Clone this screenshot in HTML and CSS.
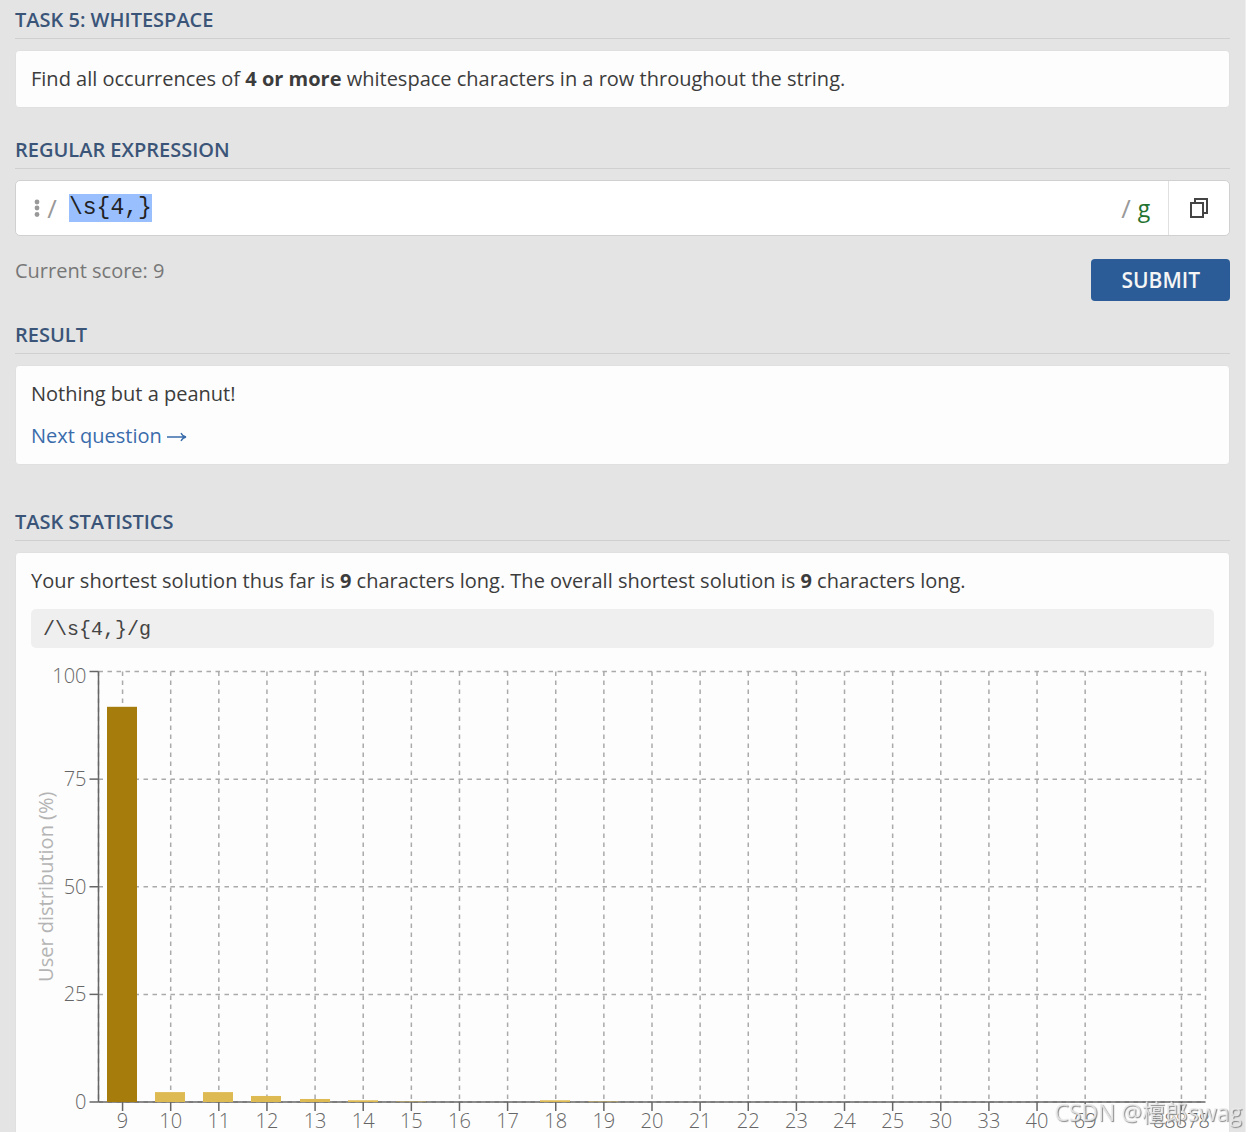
FILE: index.html
```
<!DOCTYPE html>
<html lang="en">
<head>
    <meta charset="UTF-8">
    <meta name="viewport" content="width=device-width, initial-scale=1">
    <title>Regex Quiz</title>
    <link rel="stylesheet" href="styles.css">
</head>
<body>
    <main class="quiz">
        <section class="task">
            <h2 class="heading">Task 5: Whitespace</h2>
            <div class="card">
                <p>Find all occurrences of <strong>4 or more</strong> whitespace characters in a row throughout the string.</p>
            </div>
        </section>

        <section class="expression">
            <h2 class="heading"><label for="regex">Regular Expression</label></h2>
            <form id="regexForm">
                <div class="regex-box">
                    <button type="button" class="delimiter" aria-label="Change delimiter">
                        <svg width="6" height="20" viewBox="0 0 6 20">
                            <circle cx="3" cy="4" r="2.4"/>
                            <circle cx="3" cy="10" r="2.4"/>
                            <circle cx="3" cy="16.500" r="2.4"/>
                        </svg>
                    </button>
                    <span class="slash">/</span>
                    <input class="regex-input" id="regex" type="text" value="\s{4,}" spellcheck="false" autocomplete="off">
                    <span class="slash">/</span>
                    <button type="button" class="flags" aria-label="Set flags">g</button>
                    <button type="button" class="copy" aria-label="Copy to clipboard">
                        <svg width="18" height="20" viewBox="0 0 18 20">
                            <path d="M1 5h12v14H1z"/>
                            <path d="M5 5V1h12v14h-4"/>
                        </svg>
                    </button>
                </div>
                <div class="form-footer">
                    <p class="score">Current score: 9</p>
                    <button type="submit" class="submit">Submit</button>
                </div>
            </form>
        </section>

        <section class="result">
            <h2 class="heading">Result</h2>
            <div class="card">
                <p>Nothing but a peanut!</p>
                <p><a class="next" href="#next">Next question <svg width="20" height="12" viewBox="0 0 20 12"><path d="M0 6h18M14 2c1 2 2.500 3.500 5 4-2.500.5-4 2-5 4"/></svg></a></p>
            </div>
        </section>

        <section class="statistics">
            <h2 class="heading">Task Statistics</h2>
            <div class="card">
                <p>Your shortest solution thus far is <strong>9</strong> characters long. The overall shortest solution is <strong>9</strong> characters long.</p>
                <code class="solution">/\s{4,}/g</code>
                <svg class="chart" id="chart" role="img" aria-label="User distribution (%)"></svg>
            </div>
        </section>
    </main>
    <div class="watermark">CSDN @檀郎swag</div>

    <script src="script.js"></script>
</body>
</html>
```

FILE: styles.css
```
* {
    box-sizing: border-box;
}

body {
    margin: 0;
    height: 100vh;
    overflow: hidden;
    background: #e4e4e4;
    border-right: 1px solid #efefef;
    color: #3c3c3c;
    font-family: 'Open Sans', 'Noto Sans CJK SC', sans-serif;
    font-size: 20px;
    line-height: 28px;
}

p {
    margin: 0;
}

button,
input {
    font-family: inherit;
    font-size: inherit;
    line-height: inherit;
    margin: 0;
    padding: 0;
    border: 0;
    background: none;
}

button {
    cursor: pointer;
}

.quiz {
    padding: 6px 15px 0;
}

.heading {
    margin: 0 0 11px;
    padding-bottom: 4px;
    border-bottom: 1px solid #d0d0d0;
    color: #3b5579;
    font-size: 20px;
    font-weight: 600;
    text-transform: uppercase;
}

.expression {
    margin-top: 28px;
}

.result {
    margin-top: 20px;
}

.statistics {
    margin-top: 43px;
}

.card {
    display: flex;
    flex-direction: column;
    gap: 14px;
    padding: 14px 15px;
    background: #fdfdfd;
    border: 1px solid #e0e0e0;
    border-radius: 4px;
}

/* regex field */
.regex-box {
    display: flex;
    align-items: center;
    height: 56px;
    padding-left: 18px;
    background: #fff;
    border: 1px solid #d0d0d0;
    border-radius: 5px;
    font-size: 23px;
}

.delimiter {
    display: flex;
    margin-right: 6px;
    fill: #999;
}

.slash {
    width: 12px;
    color: #999;
    font-size: 26px;
    text-align: center;
}

.regex-input {
    flex: 1;
    min-width: 0;
    margin-left: 11px;
    outline: none;
    color: #222;
    font-family: 'Liberation Mono', monospace;
}

.regex-input::selection {
    background: rgba(153, 191, 255, 0.996);
    color: #222;
}

.flags {
    width: 24px;
    margin-right: 12px;
    color: #24722f;
}

.copy {
    display: flex;
    align-items: center;
    justify-content: center;
    align-self: stretch;
    width: 61px;
    border-left: 1px solid #e0e0e0;
}

.copy svg {
    fill: none;
    stroke: #444;
    stroke-width: 2;
}

.form-footer {
    display: flex;
    justify-content: space-between;
    align-items: flex-start;
    padding-top: 23px;
}

.score {
    color: #777;
    line-height: 24px;
}

.submit {
    height: 42px;
    padding: 0 30px;
    background: #2b5c97;
    border-radius: 4px;
    color: #f5f5f5;
    font-size: 21px;
    font-weight: 600;
    text-transform: uppercase;
}

.next {
    color: #3a6cab;
    text-decoration: none;
}

.next svg {
    fill: none;
    stroke: currentColor;
    stroke-width: 1.3;
}

.solution {
    padding: 7px 12px 4px;
    background: #efefef;
    border-radius: 5px;
    color: #444;
    font-family: 'Liberation Mono', monospace;
    font-size: 20px;
}

/* statistics chart */
.chart {
    display: block;
    width: 100%;
    height: 520px;
    margin-top: -13px;
    font-size: 20px;
    font-weight: 300;
}

.grid {
    stroke: #aaa;
    stroke-width: 1.5;
    stroke-dasharray: 4.5 4.5;
}

.axis {
    stroke: #666;
    stroke-width: 1.5;
}

.bar {
    fill: #debb52;
}

.bar.current {
    fill: #a67c0c;
}

.tick {
    fill: #666;
}

.axis-title {
    fill: #b4b4b4;
    font-weight: 400;
}

.watermark {
    position: fixed;
    right: 4px;
    bottom: 6px;
    color: rgba(235, 235, 235, 0.85);
    font-size: 23px;
    text-shadow: 1px 1px 1px #888;
    pointer-events: none;
}
```

FILE: script.js
```
const SVG_NS = 'http://www.w3.org/2000/svg';

const solutions = [
    { length: 9, percent: 91.8 },
    { length: 10, percent: 2.3 },
    { length: 11, percent: 2.3 },
    { length: 12, percent: 1.4 },
    { length: 13, percent: 0.7 },
    { length: 14, percent: 0.4 },
    { length: 15, percent: 0.1 },
    { length: 16, percent: 0 },
    { length: 17, percent: 0 },
    { length: 18, percent: 0.4 },
    { length: 19, percent: 0.1 },
    { length: 20, percent: 0 },
    { length: 21, percent: 0 },
    { length: 22, percent: 0 },
    { length: 23, percent: 0 },
    { length: 24, percent: 0 },
    { length: 25, percent: 0 },
    { length: 30, percent: 0 },
    { length: 33, percent: 0 },
    { length: 40, percent: 0 },
    { length: 69, percent: 0 },
    { length: null, percent: 0 },
    { length: 88878, percent: 0 }
];

const chart = document.getElementById('chart');

function add(name, attrs, text) {
    const el = document.createElementNS(SVG_NS, name);
    for (const key in attrs) {
        el.setAttribute(key, attrs[key]);
    }
    if (text !== undefined) {
        el.textContent = text;
    }
    chart.appendChild(el);
}

function line(cls, x1, y1, x2, y2) {
    add('line', { class: cls, x1, y1, x2, y2 });
}

function drawChart() {
    chart.textContent = '';

    const left = 67.5;
    const right = chart.clientWidth - 8.5;
    const top = 22.5;
    const bottom = 453;
    const band = (right - left) / solutions.length;
    const yOf = percent => bottom - (bottom - top) * percent / 100;

    for (const value of [0, 25, 50, 75, 100]) {
        line('grid', left, yOf(value), right, yOf(value));
    }
    line('grid', left, top, left, bottom);
    line('grid', right, top, right, bottom);
    solutions.forEach((item, i) => {
        const x = left + band * (i + 0.5);
        if (item.length !== null) {
            line('grid', x, top, x, bottom);
        }
    });

    line('axis', left, bottom, right, bottom);
    line('axis', left, top, left, bottom);

    solutions.forEach((item, i) => {
        const x = left + band * (i + 0.5);
        if (item.percent > 0) {
            add('rect', {
                class: i === 0 ? 'bar current' : 'bar',
                x: Math.round(x - 15.5),
                y: yOf(item.percent),
                width: 30,
                height: bottom - yOf(item.percent)
            });
        }
        if (item.length !== null) {
            line('axis', x, bottom, x, bottom + 9);
            add('text', { class: 'tick', x, y: bottom + 26, 'text-anchor': 'middle' }, item.length);
        }
    });

    for (const value of [0, 25, 50, 75, 100]) {
        const y = yOf(value);
        line('axis', left - 9, y, left, y);
        // the top label is kept inside the plot area
        add('text', { class: 'tick', x: left - 12, y: Math.max(y + 7, top + 11), 'text-anchor': 'end' }, value);
    }

    const middle = (top + bottom) / 2;
    add('text', {
        class: 'axis-title',
        transform: `translate(22 ${middle}) rotate(-90)`,
        'text-anchor': 'middle'
    }, 'User distribution (%)');
}

drawChart();
window.addEventListener('resize', drawChart);

document.getElementById('regexForm').addEventListener('submit', e => e.preventDefault());

const regexInput = document.getElementById('regex');
regexInput.focus();
regexInput.select();
```
